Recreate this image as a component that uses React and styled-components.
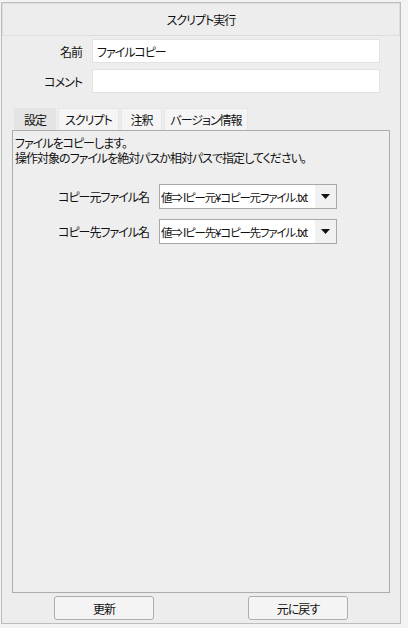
import React from "react";
import styled, { createGlobalStyle } from "styled-components";

const GlobalStyle = createGlobalStyle`
  html, body {
    margin: 0;
    padding: 0;
    background: #f3f3f3;
  }
  body {
    font-family: "Noto Sans CJK JP", "Noto Sans", sans-serif;
    font-size: 12px;
    font-feature-settings: "palt";
    letter-spacing: -1px;
    color: #111;
  }
`;

const Window = styled.div`
  box-sizing: border-box;
  margin: 2px 0 0 1px;
  width: 400px;
  height: 622px;
  border: 1px solid #bdbdbd;
  background: #ededed;
  display: flex;
  flex-direction: column;
`;

const Header = styled.div`
  box-sizing: border-box;
  height: 33px;
  border: 1px solid #dddddd;
  display: flex;
  align-items: center;
  justify-content: center;
  font-size: 12px;
`;

const Form = styled.div`
  display: grid;
  grid-template-columns: 80px 288px;
  column-gap: 10px;
  row-gap: 6px;
  margin-top: 3px;
  align-items: center;
`;

const Label = styled.label`
  text-align: right;
  white-space: nowrap;
`;

const TextInput = styled.div`
  box-sizing: border-box;
  height: 24px;
  background: #fff;
  border: 1px solid #e2e2e2;
  display: flex;
  align-items: center;
  padding: 0 4px;
`;

const TabBar = styled.div`
  display: flex;
  gap: 2px;
  margin: 15px 0 0 12px;
  height: 22px;
`;

const Tab = styled.div`
  box-sizing: border-box;
  height: 22px;
  width: ${(p) => p.$w}px;
  display: flex;
  align-items: center;
  justify-content: center;
  background: ${(p) => (p.$active ? "#e4e4e4" : "#f5f5f5")};
  border: 1px solid ${(p) => (p.$active ? "#e4e4e4" : "#e6e6e6")};
  border-bottom: none;
`;

const Panel = styled.div`
  box-sizing: border-box;
  flex: 1;
  margin: 0 10px 0 10px;
  border: 1px solid #acacac;
  background: #eeeeee;
  padding: 4px 2px;
`;

const Line = styled.div`
  height: 15px;
  line-height: 15px;
  white-space: nowrap;
`;

const FieldGrid = styled.div`
  display: grid;
  grid-template-columns: 134px 178px;
  column-gap: 10px;
  row-gap: 10px;
  margin-top: 19px;
  align-items: center;
`;

const Select = styled.div`
  box-sizing: border-box;
  height: 25px;
  border: 1px solid #a8a8a8;
  background: #fff;
  display: flex;
  align-items: stretch;
`;

const SelectValue = styled.div`
  flex: 1;
  overflow: hidden;
  white-space: nowrap;
  display: flex;
  align-items: center;
  padding-left: 1px;
  font-size: 11.5px;
  letter-spacing: -1.2px;
`;

const Arrow = styled.div`
  width: 21px;
  background: #f1f1f1;
  display: flex;
  align-items: center;
  justify-content: center;
`;

const ButtonRow = styled.div`
  display: flex;
  gap: 94px;
  padding: 3px 0 3px 52px;
`;

const Button = styled.button`
  box-sizing: border-box;
  width: 100px;
  height: 24px;
  border: 1px solid #a9aeb5;
  border-radius: 3px;
  background: #f4f4f4;
  font-family: inherit;
  font-size: 12px;
  font-feature-settings: "palt";
  letter-spacing: -1px;
  color: #111;
  padding: 0;
`;

const tabs = [
  { label: "設定", w: 42, active: true },
  { label: "スクリプト", w: 61 },
  { label: "注釈", w: 41 },
  { label: "バージョン情報", w: 84 },
];

const fields = [
  { label: "コピー元ファイル名", value: "値⇒ Iピー元¥コピー元ファイル.txt" },
  { label: "コピー先ファイル名", value: "値⇒ Iピー先¥コピー先ファイル.txt" },
];

export default function App() {
  return (
    <>
      <GlobalStyle />
      <Window>
        <Header>スクリプト実行</Header>
        <Form>
          <Label>名前</Label>
          <TextInput>ファイルコピー</TextInput>
          <Label>コメント</Label>
          <TextInput />
        </Form>
        <TabBar>
          {tabs.map((t) => (
            <Tab key={t.label} $w={t.w} $active={t.active}>
              {t.label}
            </Tab>
          ))}
        </TabBar>
        <Panel>
          <Line>ファイルをコピーします。</Line>
          <Line>操作対象のファイルを絶対パスか相対パスで指定してください。</Line>
          <FieldGrid>
            {fields.map((f) => (
              <React.Fragment key={f.label}>
                <Label>{f.label}</Label>
                <Select>
                  <SelectValue>{f.value}</SelectValue>
                  <Arrow>
                    <svg width="9" height="5" viewBox="0 0 9 5">
                      <path d="M0 0 H9 L4.5 5 Z" fill="#111" />
                    </svg>
                  </Arrow>
                </Select>
              </React.Fragment>
            ))}
          </FieldGrid>
        </Panel>
        <ButtonRow>
          <Button>更新</Button>
          <Button>元に戻す</Button>
        </ButtonRow>
      </Window>
    </>
  );
}
